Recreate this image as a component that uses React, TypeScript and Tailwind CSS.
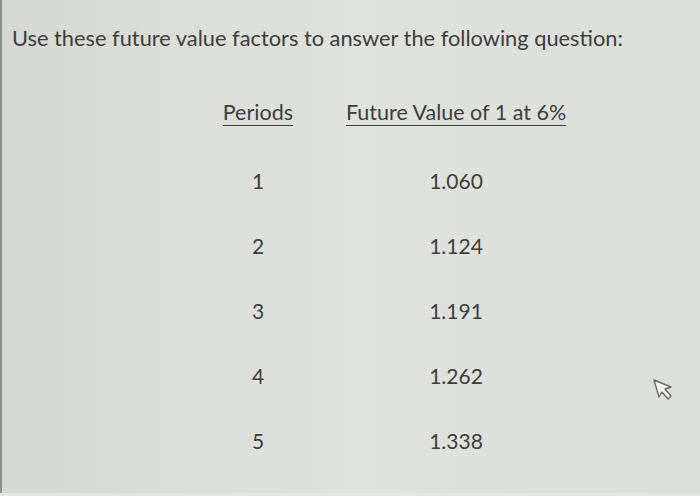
const rows = [
  { p: '1', v: '1.060' },
  { p: '2', v: '1.124' },
  { p: '3', v: '1.191' },
  { p: '4', v: '1.262' },
  { p: '5', v: '1.338' },
];

export default function App() {
  return (
    <div className="relative w-[700px] h-[496px] overflow-hidden bg-[#e6e7e3]" style={{ fontFamily: 'Lato, "Open Sans", sans-serif' }}>
      <div className="border-l-2 border-[#8e8f8a] h-[493px] bg-gradient-to-r from-[#d6d8d4] via-[#e0e2de] to-[#dcdeda] text-[#3d3d3d]">
        <div className="pt-[24px] pl-[10px] text-[21.8px] leading-[28px]">
          Use these future value factors to answer the following question:
        </div>

        <div className="mt-[46px] flex text-[21.5px] leading-[28px]">
          <div className="w-[291px] flex justify-end">
            <span className="underline underline-offset-[5px] decoration-1">Periods</span>
          </div>
          <div className="ml-[53px]">
            <span className="underline underline-offset-[5px] decoration-1">Future Value of 1 at 6%</span>
          </div>
        </div>

        <div className="mt-[42px] flex flex-col gap-[39px] text-[21px] leading-[26px]">
          {rows.map((r) => (
            <div key={r.p} className="flex">
              <div className="ml-[206px] w-[100px] text-center">{r.p}</div>
              <div className="w-[296px] text-center">{r.v}</div>
            </div>
          ))}
        </div>
      </div>

      <svg className="absolute left-[651px] top-[377px]" width="30" height="30" viewBox="0 0 30 30">
        <path d="M3 3 L8 20 L11 15 L17 22 L20 19 L14 12 L20 10 Z" fill="#f2f3f0" stroke="#6b6b6b" strokeWidth="1.4" strokeLinejoin="round" />
      </svg>
    </div>
  );
}
